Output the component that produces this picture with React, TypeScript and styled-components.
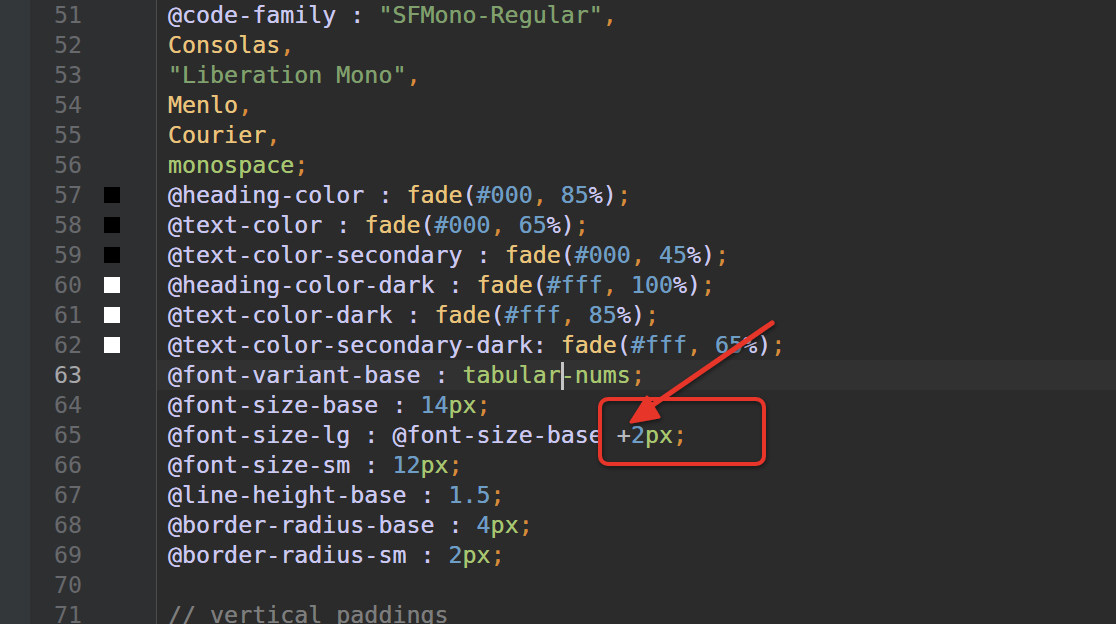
import React from "react";
import styled, { createGlobalStyle } from "styled-components";

const Global = createGlobalStyle`
  html, body { margin: 0; padding: 0; background: #2b2b2b; overflow: hidden; }
  #root { width: 1116px; height: 624px; }
`;

const C = {
  v: "#cbc8f2",
  y: "#ebc47b",
  g: "#a8c770",
  s: "#80a06d",
  o: "#d68b3a",
  b: "#6e9dc6",
  p: "#cbc8f2",
  c: "#7d7d7d",
  w: "#b9b9bd",
};

type Tok = [keyof typeof C, string];
type LineData = { n: number; swatch?: string; toks: Tok[]; current?: boolean };

const fade = (arg: string, pct: string): Tok[] => [
  ["y", "fade"],
  ["p", "("],
  ["b", arg],
  ["o", ","],
  ["p", " "],
  ["b", pct],
  ["p", "%)"],
  ["o", ";"],
];

const lines: LineData[] = [
  { n: 51, toks: [["v", "@code-family"], ["p", " : "], ["s", '"SFMono-Regular"'], ["o", ","]] },
  { n: 52, toks: [["y", "Consolas"], ["o", ","]] },
  { n: 53, toks: [["s", '"Liberation Mono"'], ["o", ","]] },
  { n: 54, toks: [["y", "Menlo"], ["o", ","]] },
  { n: 55, toks: [["y", "Courier"], ["o", ","]] },
  { n: 56, toks: [["g", "monospace"], ["o", ";"]] },
  { n: 57, swatch: "#000", toks: [["v", "@heading-color"], ["p", " : "], ...fade("#000", "85")] },
  { n: 58, swatch: "#000", toks: [["v", "@text-color"], ["p", " : "], ...fade("#000", "65")] },
  { n: 59, swatch: "#000", toks: [["v", "@text-color-secondary"], ["p", " : "], ...fade("#000", "45")] },
  { n: 60, swatch: "#fff", toks: [["v", "@heading-color-dark"], ["p", " : "], ...fade("#fff", "100")] },
  { n: 61, swatch: "#fff", toks: [["v", "@text-color-dark"], ["p", " : "], ...fade("#fff", "85")] },
  { n: 62, swatch: "#fff", toks: [["v", "@text-color-secondary-dark"], ["p", ": "], ...fade("#fff", "65")] },
  { n: 63, current: true, toks: [["v", "@font-variant-base"], ["p", " : "], ["g", "tabular"], ["g", "-nums"], ["o", ";"]] },
  { n: 64, toks: [["v", "@font-size-base"], ["p", " : "], ["b", "14"], ["g", "px"], ["o", ";"]] },
  { n: 65, toks: [["v", "@font-size-lg"], ["p", " : "], ["v", "@font-size-base "], ["w", "+"], ["b", "2"], ["g", "px"], ["o", ";"]] },
  { n: 66, toks: [["v", "@font-size-sm"], ["p", " : "], ["b", "12"], ["g", "px"], ["o", ";"]] },
  { n: 67, toks: [["v", "@line-height-base"], ["p", " : "], ["b", "1.5"], ["o", ";"]] },
  { n: 68, toks: [["v", "@border-radius-base"], ["p", " : "], ["b", "4"], ["g", "px"], ["o", ";"]] },
  { n: 69, toks: [["v", "@border-radius-sm"], ["p", " : "], ["b", "2"], ["g", "px"], ["o", ";"]] },
  { n: 70, toks: [] },
  { n: 71, toks: [["c", "// vertical paddings"]] },
];

const Page = styled.div`
  position: relative;
  display: flex;
  width: 1116px;
  height: 624px;
  overflow: hidden;
  background: #2b2b2b;
  font-family: "DejaVu Sans Mono", "Liberation Mono", monospace;
  font-size: 23.3px;
`;

const Strip = styled.div`
  width: 30px;
  flex: none;
  background: #34373a;
`;

const Editor = styled.div`
  flex: 1;
  display: flex;
  flex-direction: column;
`;

const Row = styled.div`
  display: flex;
  height: 30px;
  line-height: 30px;
  flex: none;
`;

const Gutter = styled.div`
  width: 126px;
  flex: none;
  display: flex;
  align-items: center;
  background: #2e2f31;
  border-right: 1px solid #4c4d4f;
`;

const LineNo = styled.span<{ $current?: boolean }>`
  width: 52px;
  text-align: right;
  color: ${(p) => (p.$current ? "#a8a8aa" : "#68696c")};
`;

const Swatch = styled.span<{ $color?: string }>`
  width: 16px;
  height: 16px;
  margin-left: 22px;
  background: ${(p) => p.$color ?? "transparent"};
`;

const Code = styled.div<{ $current?: boolean }>`
  flex: 1;
  padding-left: 11px;
  white-space: pre;
  text-shadow: 0 0 0.4px currentColor;
  background: ${(p) => (p.$current ? "#313131" : "#2b2b2b")};
`;

const Tk = styled.span<{ $c: string }>`
  color: ${(p) => p.$c};
`;

const Cursor = styled.span`
  display: inline-block;
  width: 3px;
  height: 28px;
  margin-right: -3px;
  vertical-align: -7px;
  background: #c4c4c4;
`;

const Overlay = styled.svg`
  position: absolute;
  left: 0;
  top: 0;
  pointer-events: none;
`;

export default function App() {
  return (
    <>
      <Global />
      <Page>
        <Strip />
        <Editor>
          {lines.map((l) => (
            <Row key={l.n}>
              <Gutter>
                <LineNo $current={l.current}>{l.n}</LineNo>
                <Swatch $color={l.swatch} />
              </Gutter>
              <Code $current={l.current}>
                {l.toks.map((t, i) => (
                  <React.Fragment key={i}>
                    {l.current && t[1] === "-nums" ? <Cursor /> : null}
                    <Tk $c={C[t[0]]}>{t[1]}</Tk>
                  </React.Fragment>
                ))}
                {l.toks.length === 0 ? " " : null}
              </Code>
            </Row>
          ))}
        </Editor>
        <Overlay width="1116" height="624" viewBox="0 0 1116 624">
          <defs>
            <filter id="sh" x="-20%" y="-20%" width="140%" height="140%">
              <feDropShadow dx="1" dy="2" stdDeviation="2" floodColor="#000" floodOpacity="0.5" />
            </filter>
          </defs>
          <g filter="url(#sh)">
            <rect x="600" y="399" width="164" height="65" rx="8" ry="8" fill="none" stroke="#e8352b" strokeWidth="4" />
            <line x1="772" y1="323" x2="644" y2="411" stroke="#e8352b" strokeWidth="5" strokeLinecap="round" />
            <path d="M631 422 L647 397 L659 417 Z" fill="#e8352b" stroke="#e8352b" strokeWidth="3" strokeLinejoin="round" />
          </g>
        </Overlay>
      </Page>
    </>
  );
}
